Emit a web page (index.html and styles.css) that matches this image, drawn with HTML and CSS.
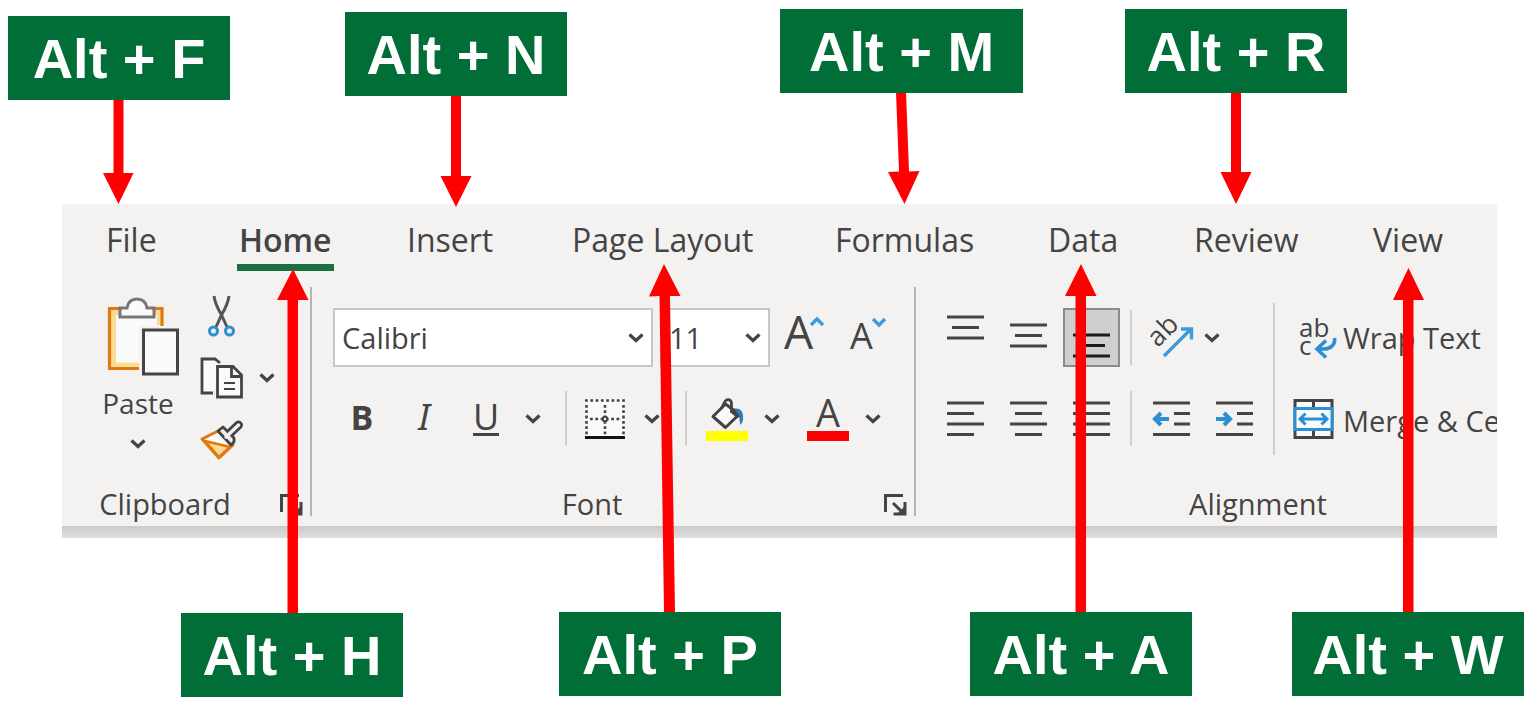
FILE: index.html
```html
<!DOCTYPE html>
<html lang="en">
<head>
<meta charset="utf-8">
<title>Ribbon tab shortcuts</title>
<link rel="stylesheet" href="styles.css">
</head>
<body>
<svg class="defs" aria-hidden="true">
  <symbol id="chevron" viewBox="0 0 16 10"><path d="M1.5 1.5 8 7.5l6.500-6" fill="none" stroke="currentColor" stroke-width="3.200"/></symbol>
  <symbol id="launcher" viewBox="0 0 24 24"><path d="M2.500 20V3.500H20M10 11l10 10M22 10v12H10.500" fill="none" stroke="#444" stroke-width="3"/><path d="M22 14v8h-8z" fill="#444"/></symbol>
</svg>
<main class="stage">
  <section class="ribbon">
    <nav class="tabs">
      <button class="tab">File</button>
      <button class="tab tab-active">Home</button>
      <button class="tab">Insert</button>
      <button class="tab">Page Layout</button>
      <button class="tab">Formulas</button>
      <button class="tab">Data</button>
      <button class="tab">Review</button>
      <button class="tab">View</button>
    </nav>

    <div class="groups">
      <section class="group divided">
        <div class="clipboard-tools">
          <button class="paste">
            <svg width="86" height="82" viewBox="0 0 86 82" fill="none">
              <path d="M14.500 13.500h53v60h-53z" fill="#fafafa"/>
              <path d="M64.500 30V17.500h-46V70H46" stroke="#f9dc94" stroke-width="5"/>
              <path d="M67 31V13.500H14.500v60H46" stroke="#e07a10" stroke-width="3.200"/>
              <path d="M25 13h7c1-6 5-9 10-9s9 3 10 9h7v9H25z" fill="#fafafa" stroke="#777" stroke-width="3"/>
              <path d="M44 31h43v52H44z" fill="#f3f2f1"/>
              <path d="M48.500 35h34v44h-34z" fill="#fafafa" stroke="#444" stroke-width="3"/>
            </svg>
            <span class="paste-label">Paste</span>
            <svg class="chevron" aria-hidden="true"><use href="#chevron"/></svg>
          </button>
          <div class="clipboard-side">
            <button class="icon-button" aria-label="Cut">
              <svg width="44" height="42" viewBox="0 0 44 42" fill="none">
                <path d="M14 1c1 8 4 13 7.500 19L27 32M29 1c-1 8-4 13-7.500 19L16 32" stroke="#555" stroke-width="3"/>
                <circle cx="13.500" cy="36" r="4" stroke="#2b8fd3" stroke-width="3"/>
                <circle cx="29.500" cy="36" r="4" stroke="#2b8fd3" stroke-width="3"/>
              </svg>
            </button>
            <div class="copy-split">
              <button class="icon-button" aria-label="Copy">
                <svg width="44" height="42" viewBox="0 0 44 42" fill="none" stroke="#444" stroke-width="2.800">
                  <path d="M13 36H2V2h13l5 4" fill="#fafafa"/>
                  <path d="M17.500 9.500H33l8.500 8.500v22h-24z" fill="#fafafa"/>
                  <path d="M31.500 10v9.500H41"/><path d="M24 26h11M24 32h11" stroke-width="2"/>
                </svg>
              </button>
              <button class="icon-button" aria-label="Copy options"><svg class="chevron"><use href="#chevron"/></svg></button>
            </div>
            <button class="icon-button" aria-label="Format Painter">
              <svg width="44" height="42" viewBox="0 0 44 42" fill="none">
                <path d="M2 20l16-8 15 14-14 13z" fill="#fafafa" stroke="#e07a10" stroke-width="3" stroke-linejoin="round"/>
                <path d="M5 22l25 6-11 10z" fill="#f9dc94" stroke="#e07a10" stroke-width="2.500"/>
                <path d="M29 15l9.500-9" stroke="#444" stroke-width="9" stroke-linecap="round"/>
                <path d="M18 12l5-4 11 11 0 4-3 3z" fill="#eee" stroke="#444" stroke-width="2.800" stroke-linejoin="round"/>
                <path d="M26 18L38.500 6" stroke="#eee" stroke-width="3.400" stroke-linecap="round"/>
              </svg>
            </button>
          </div>
        </div>
        <footer class="group-footer">
          <span class="group-name">Clipboard</span>
          <button class="launcher" aria-label="Clipboard settings"><svg width="24" height="24"><use href="#launcher"/></svg></button>
        </footer>
      </section>

      <section class="group divided">
        <div class="tool-rows">
          <div class="font-row">
            <div class="combo combo-font">
              <select aria-label="Font"><option>Calibri</option></select>
              <svg class="chevron"><use href="#chevron"/></svg>
            </div>
            <div class="combo combo-size">
              <select aria-label="Font size"><option>11</option></select>
              <svg class="chevron"><use href="#chevron"/></svg>
            </div>
            <button class="icon-button tool" aria-label="Increase font size">
              <svg width="44" height="59" viewBox="0 0 44 59">
                <text class="glyph" x="0" y="41" font-size="46">A</text>
                <path d="M27 17l6-6 6 6" fill="none" stroke="#3e9bdb" stroke-width="3.400"/>
              </svg>
            </button>
            <button class="icon-button tool" aria-label="Decrease font size">
              <svg width="40" height="59" viewBox="0 0 40 59">
                <text class="glyph" x="0" y="41" font-size="36">A</text>
                <path d="M23 11l6 6 6-6" fill="none" stroke="#3e9bdb" stroke-width="3.400"/>
              </svg>
            </button>
          </div>
          <div class="style-row">
            <button class="icon-button style-button bold" aria-label="Bold">B</button>
            <button class="icon-button style-button italic" aria-label="Italic">I</button>
            <button class="icon-button style-button" aria-label="Underline"><span class="underlined">U</span></button>
            <button class="icon-button" aria-label="Underline options"><svg class="chevron"><use href="#chevron"/></svg></button>
            <span class="rule"></span>
            <button class="icon-button" aria-label="Borders">
              <svg width="40" height="42" viewBox="0 0 40 42" fill="none" stroke="#444" stroke-width="2.600">
                <path d="M0 1h40v39H0z" fill="#fafafa" stroke="none"/>
                <path d="M0 2.500h40M5 21h31" stroke-dasharray="2.800 2.500"/>
                <path d="M1.500 7v31M20 7v31M38.500 7v31" stroke-dasharray="2.800 2.500"/>
                <circle cx="20" cy="21" r="2.200" fill="#fafafa" stroke-width="2"/>
                <path d="M0 39.500h40" stroke="#111" stroke-width="3"/>
              </svg>
            </button>
            <button class="icon-button" aria-label="Border options"><svg class="chevron"><use href="#chevron"/></svg></button>
            <span class="rule"></span>
            <button class="icon-button" aria-label="Fill color">
              <svg width="42" height="46" viewBox="0 0 42 46" fill="none">
                <path d="M7 20.500L19.500 8 33 18.500 19.500 31.500z" fill="#fafafa" stroke="#444" stroke-width="3" stroke-linejoin="round"/>
                <path d="M25.500 17V8c0-5-5-6-7-1.500l-3 6" stroke="#444" stroke-width="2.800"/>
                <path d="M28 13c7-2 10 4 9 11l-2 5c-2-3-1-6-2-10l-5-4z" fill="#2b7dc0"/>
                <path d="M28 12l6 9-3 1-6-5z" fill="#444"/>
                <path d="M0 35h42v10H0z" fill="#ff0"/>
              </svg>
            </button>
            <button class="icon-button" aria-label="Fill color options"><svg class="chevron"><use href="#chevron"/></svg></button>
            <button class="icon-button font-color" aria-label="Font color">
              <svg width="42" height="46" viewBox="0 0 42 46">
                <text class="glyph" x="9" y="31" font-size="38">A</text>
                <path d="M0 35h42v10H0z" fill="#f00"/>
              </svg>
            </button>
            <button class="icon-button" aria-label="Font color options"><svg class="chevron"><use href="#chevron"/></svg></button>
          </div>
        </div>
        <footer class="group-footer">
          <span class="group-name">Font</span>
          <button class="launcher" aria-label="Font settings"><svg width="24" height="24"><use href="#launcher"/></svg></button>
        </footer>
      </section>

      <section class="group">
        <div class="alignment-tools">
          <div class="tool-rows">
            <div class="align-row">
              <button class="icon-button tool" aria-label="Top align"><svg class="lines" width="37" height="59"><path d="M0 9h37M5 19.500h27M0 30h37"/></svg></button>
              <button class="icon-button tool" aria-label="Middle align"><svg class="lines" width="37" height="59"><path d="M0 17h37M5 27.500h27M0 38h37"/></svg></button>
              <button class="icon-button tool pressed" aria-label="Bottom align"><svg class="lines" width="37" height="55"><path d="M0 25h37M5 35.500h27M0 46h37"/></svg></button>
              <span class="rule"></span>
              <div class="split">
                <button class="icon-button tool" aria-label="Orientation">
                  <svg width="44" height="46" viewBox="0 0 44 46">
                    <text class="glyph" x="19" y="22" font-size="27" text-anchor="middle" transform="rotate(-45 19 22)">ab</text>
                    <path d="M14 41l27-27M31 14h10.500v10.500" fill="none" stroke="#3e9bdb" stroke-width="3.400"/>
                  </svg>
                </button>
                <button class="icon-button" aria-label="Orientation options"><svg class="chevron"><use href="#chevron"/></svg></button>
              </div>
            </div>
            <div class="align-row">
              <button class="icon-button tool" aria-label="Align left"><svg class="lines" width="37" height="36"><path d="M0 2h37M0 12.500h27M0 23h37M0 33.500h27"/></svg></button>
              <button class="icon-button tool" aria-label="Center"><svg class="lines" width="37" height="36"><path d="M0 2h37M5 12.500h27M0 23h37M5 33.500h27"/></svg></button>
              <button class="icon-button tool" aria-label="Justify"><svg class="lines" width="37" height="36"><path d="M0 2h37M0 12.500h37M0 23h37M0 33.500h37"/></svg></button>
              <span class="rule"></span>
              <button class="icon-button tool" aria-label="Decrease indent"><svg class="lines" width="37" height="36"><path d="M0 2h37M21 12.500h16M21 23h16M0 33.500h37"/><path class="blue" d="M16 18H2M8 12l-6 6 6 6"/></svg></button>
              <button class="icon-button tool" aria-label="Increase indent"><svg class="lines" width="37" height="36"><path d="M0 2h37M21 12.500h16M21 23h16M0 33.500h37"/><path class="blue" d="M0 18h14M8 12l6 6-6 6"/></svg></button>
            </div>
          </div>
          <span class="rule rule-tall"></span>
          <div class="tool-rows">
            <button class="text-button">
              <svg width="46" height="52" viewBox="0 0 46 52">
                <text class="glyph" font-size="26"><tspan x="6" y="25">ab</tspan><tspan x="6" y="43">c</tspan></text>
                <path d="M41.500 26c1 7-4 11-11 11h-7M33 28.500L24 37l9 8.500" fill="none" stroke="#2b8fd3" stroke-width="3.600"/>
              </svg>
              Wrap Text
            </button>
            <button class="text-button text-button-low">
              <svg width="46" height="42" viewBox="0 0 46 42" fill="none" stroke-width="3">
                <path d="M2 2.500h37v37H2zM20.500 2v8M20.500 32v8" fill="#fafafa" stroke="#444"/>
                <path d="M2 10.500h37v21H2z" fill="#fafafa" stroke="#2b8fd3"/>
                <path d="M7 21h27M12.500 15.500L7 21l5.500 5.500M28.500 15.500L34 21l-5.500 5.500" stroke="#2b8fd3"/>
              </svg>
              <span>Merge &amp; Center</span>
            </button>
          </div>
        </div>
        <footer class="group-footer"><span class="group-name">Alignment</span></footer>
      </section>
    </div>
  </section>

  <svg class="arrows" width="1536" height="722" viewBox="0 0 1536 722" fill="#f00" aria-hidden="true">
    <path d="M113.500 99h10v74h10L118.500 204 103 173h10.500z"/>
    <path d="M451 95h10v81h10.500L456 207l-15.500-31H451z"/>
    <path d="M896 92h10l3 79.500 10.500-.500L904.500 204 888 172l11-.500z"/>
    <path d="M1231 92h10v80h10.500L1236 204l-15.500-32h10.500z"/>
    <path d="M287.500 614h10.500V300h10.500L293 269l-16 31h10.500z"/>
    <path d="M664 613h11L670 296h10.500L664 264l-15 32.500 10.500-.500z"/>
    <path d="M1075.500 613h10.500V296h10.500L1081 264l-16 32h10.500z"/>
    <path d="M1403 613h10.500V300h10.500L1408.500 268 1393 300h10z"/>
  </svg>
  <div class="key key-f">Alt + F</div>
  <div class="key key-n">Alt + N</div>
  <div class="key key-m">Alt + M</div>
  <div class="key key-r">Alt + R</div>
  <div class="key key-h">Alt + H</div>
  <div class="key key-p">Alt + P</div>
  <div class="key key-a">Alt + A</div>
  <div class="key key-w">Alt + W</div>
</main>
</body>
</html>
```

FILE: styles.css
```css
* { box-sizing: border-box; }

body {
  margin: 0;
  background: #fff;
  color: #444;
  font-family: "Open Sans", "Noto Sans", sans-serif;
  font-size: 28px;
  font-weight: 500;
}

button, select {
  margin: 0;
  padding: 0;
  border: 0;
  background: none;
  color: inherit;
  font: inherit;
}

svg { display: block; flex: none; overflow: visible; }
.defs { position: absolute; width: 0; height: 0; }

.stage {
  position: relative;
  padding: 204px 39px 184px 62px;
  overflow: hidden;
}

/* Ribbon */
.ribbon {
  overflow: hidden;
  background: #f3f2f1;
}
.ribbon::after {
  content: "";
  display: block;
  height: 12px;
  background: linear-gradient(#cbcac9, #dfdfde);
}

.tabs {
  display: grid;
  grid-template-columns: 133fr 168fr 165fr 263fr 213fr 146fr 179fr 126fr;
  justify-items: start;
  padding: 14px 0 0 42px;
}
.tab {
  padding: 0 2px 2px;
  border-bottom: 7px solid transparent;
  font-size: 32px;
  line-height: 44px;
  white-space: nowrap;
}
.tab-active {
  border-color: #1a7040;
  font-weight: 600;
}

.groups {
  display: grid;
  grid-template-columns: 250px 604px minmax(684px, 1fr);
  padding: 16px 0 10px;
}
.group {
  display: flex;
  flex-direction: column;
  justify-content: space-between;
  height: 229px;
}
.divided { border-right: 2px solid #b5b4b3; }

.group-footer { display: flex; align-items: flex-end; }
.group-name {
  flex: 1;
  font-size: 29px;
  line-height: 24px;
  text-align: center;
}
.launcher {
  display: flex;
  justify-content: flex-end;
  width: 42px;
  padding-right: 7px;
}

.icon-button {
  display: flex;
  align-items: center;
  justify-content: center;
}
.tool { width: 57px; height: 59px; }
.chevron { width: 16px; height: 10px; }
.glyph { font-family: "Open Sans", "Noto Sans", sans-serif; fill: #444; }

.rule {
  width: 2px;
  height: 55px;
  background: #d0cfce;
}

/* Clipboard */
.clipboard-tools {
  display: flex;
  gap: 18px;
  padding: 8px 0 0 34px;
}
.paste {
  display: flex;
  flex-direction: column;
  align-items: center;
  width: 84px;
}
.paste-label { margin: 7px 0 17px; line-height: 38px; }
.clipboard-side {
  display: flex;
  flex-direction: column;
  align-items: flex-start;
  gap: 20px;
  padding-left: 2px;
}
.copy-split { display: flex; gap: 15px; }

/* Font */
.tool-rows {
  display: grid;
  grid-template-rows: 59px 59px;
  gap: 22px;
  padding-top: 21px;
}
.font-row {
  display: flex;
  gap: 7px;
  padding-left: 21px;
}
.combo {
  display: grid;
  align-items: center;
  border: 2px solid #c8c7c6;
  background: #fff;
}
.combo > * { grid-area: 1 / 1; }
.combo select {
  appearance: none;
  width: 100%;
  height: 100%;
  padding-left: 7px;
  font-size: 29px;
}
.combo .chevron { justify-self: end; margin-right: 7px; pointer-events: none; }
.combo-font { width: 320px; }
.combo-size { width: 110px; }

.style-row {
  display: grid;
  grid-template-columns: 62px 62px 62px 31px 36px 42px 52px 16px 65px 26px 68px 40px;
  align-items: center;
  justify-items: center;
  padding-left: 19px;
}
.style-button { padding-bottom: 4px; font-size: 36px; line-height: 40px; }
.bold { font-size: 34px; font-weight: 700; }
.italic { font-family: "Noto Sans", sans-serif; font-style: italic; font-weight: 400; }
.underlined { margin-top: 3px; border-bottom: 3px solid #444; line-height: 32px; font-weight: 400; }
.font-color { justify-self: end; width: 50px; }

/* Alignment */
.alignment-tools { display: flex; padding-left: 21px; }
.align-row { display: flex; align-items: center; gap: 6px; }
.align-row .rule { margin: 0 5px 0 4px; }
.align-row .split { display: flex; }
.split .chevron { margin-left: 4px; }
.pressed { border: 2px solid #8c8b8a; background: #d0cfce; }
.lines { fill: none; stroke: #444; stroke-width: 3; }
.pressed .lines { stroke: #1c1c1c; }
.lines .blue { stroke: #2b8fd3; stroke-width: 4; }
.rule-tall { height: 152px; margin: 16px 18px -12px 10px; }
.text-button {
  display: flex;
  align-items: center;
  gap: 4px;
  font-size: 29px;
  white-space: nowrap;
}
.text-button-low span { padding-top: 4px; }

/* Shortcut callouts, pinned over the ribbon */
.arrows { position: absolute; top: 0; left: 0; pointer-events: none; }
.key {
  position: absolute;
  width: 222px;
  padding-top: 2px;
  background: #026e37;
  color: #fff;
  font: 700 56px/82px "Liberation Sans", Arial, sans-serif;
  text-align: center;
  white-space: nowrap;
}
.key-f { left: 8px; top: 16px; }
.key-n { left: 345px; top: 12px; }
.key-m { left: 780px; top: 9px; width: 243px; }
.key-r { left: 1125px; top: 9px; }
.key-h { left: 181px; top: 613px; }
.key-p { left: 559px; top: 612px; }
.key-a { left: 970px; top: 612px; }
.key-w { left: 1292px; top: 612px; width: 232px; }
```
